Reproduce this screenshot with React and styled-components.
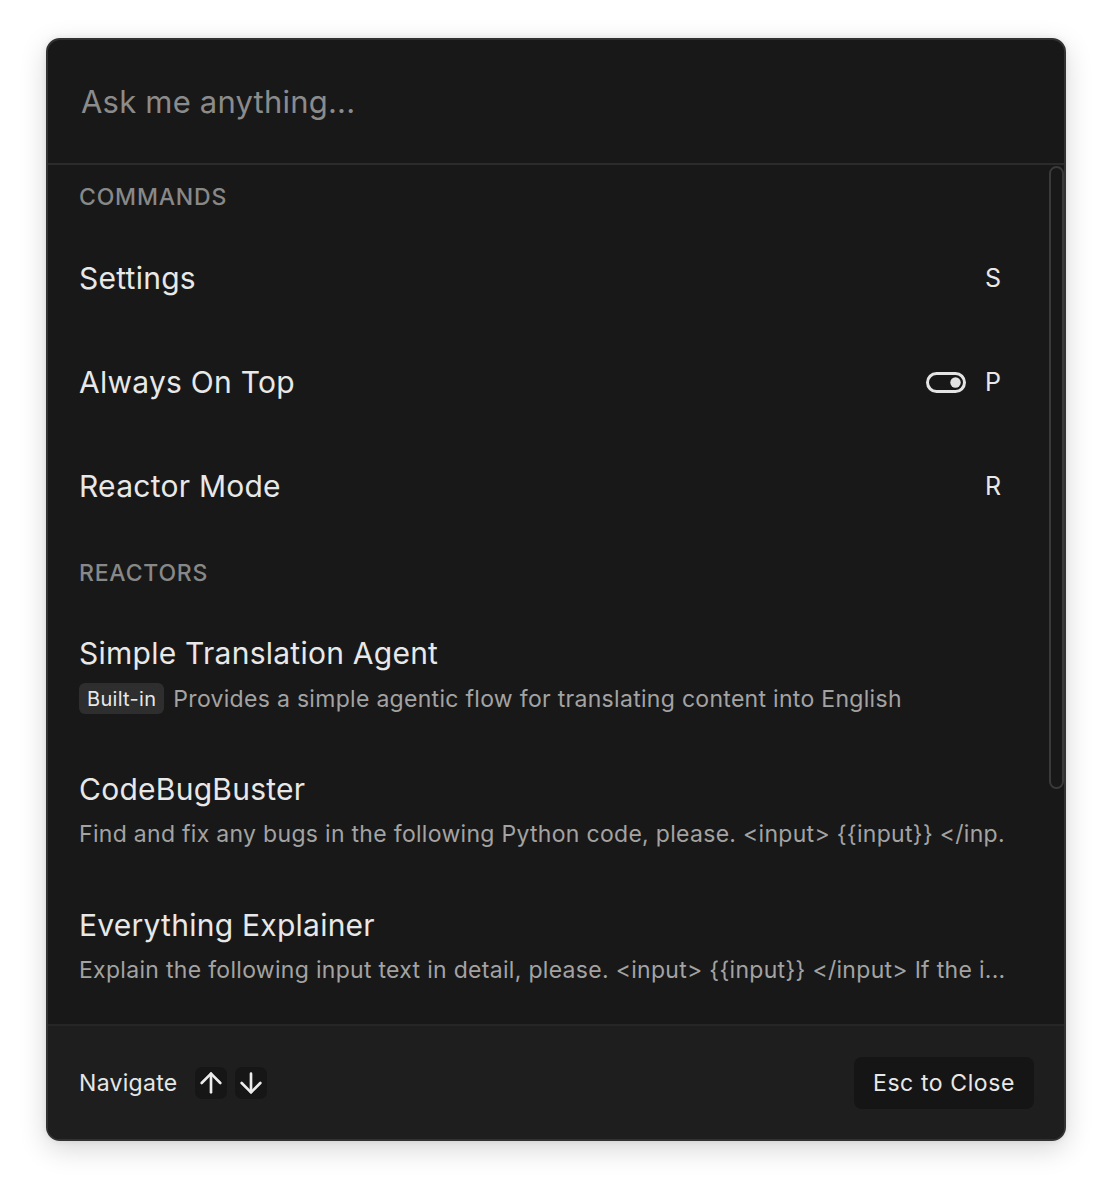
import styled, { createGlobalStyle } from "styled-components";
import { ArrowUp, ArrowDown } from "lucide-react";

const GlobalStyle = createGlobalStyle`
  * {
    box-sizing: border-box;
  }
  body {
    margin: 0;
    background: #ffffff;
    font-family: Inter, "Noto Sans", "Liberation Sans", sans-serif;
    -webkit-font-smoothing: antialiased;
  }
`;

const Page = styled.div`
  padding: 38px 46px;
`;
const Panel = styled.div`
  width: 1020px;
  height: 1103px;
  display: flex;
  flex-direction: column;
  background: #181818;
  border: 2px solid #323232;
  border-radius: 14px;
  overflow: hidden;
  box-shadow: 0 8px 28px rgba(0, 0, 0, 0.16), 0 0 6px rgba(0, 0, 0, 0.08);
`;
const Header = styled.div`
  height: 125px;
  flex-shrink: 0;
  display: flex;
  align-items: center;
  padding: 0 33px;
  border-bottom: 2px solid #2b2b2b;
`;
const SearchInput = styled.input`
  width: 100%;
  background: transparent;
  border: none;
  outline: none;
  font-family: inherit;
  font-size: 31px;
  letter-spacing: 0.2px;
  color: #e6e6e6;
  padding: 0;
  &::placeholder {
    color: #8b8b8b;
  }
`;
const ListArea = styled.div`
  flex: 1;
  min-height: 0;
  display: flex;
`;
const ListContent = styled.div`
  flex: 1;
  min-width: 0;
  overflow: hidden;
  padding: 0 40px 0 31px;
`;
const ScrollTrack = styled.div`
  width: 15px;
  flex-shrink: 0;
  padding-top: 1px;
`;
const ScrollThumb = styled.div`
  height: 623px;
  border: 2px solid #3a3a3a;
  border-radius: 8px;
`;
const Label = styled.div`
  padding: ${(p) => (p.$first ? "20px 0 17px" : "23px 0 25px")};
  font-size: 23px;
  line-height: 24px;
  font-weight: 500;
  letter-spacing: 0.8px;
  text-transform: uppercase;
  color: #888888;
`;
const CommandRow = styled.div`
  height: 104px;
  display: flex;
  align-items: center;
  justify-content: space-between;
`;
const Title = styled.div`
  font-size: 30px;
  line-height: 40px;
  letter-spacing: 0.25px;
  color: #e8e8e8;
  white-space: nowrap;
`;
const Trailing = styled.div`
  display: flex;
  align-items: center;
  gap: 11px;
`;
const Shortcut = styled.span`
  width: 32px;
  text-align: center;
  font-size: 25px;
  color: #e8e8e8;
`;
const ReactorItem = styled.div`
  height: 136px;
  padding-top: 23px;
`;
const DescRow = styled.div`
  margin-top: 10px;
  display: flex;
  align-items: center;
  gap: 9px;
  min-width: 0;
`;
const Badge = styled.span`
  flex-shrink: 0;
  height: 31px;
  padding: 0 8px;
  display: inline-flex;
  align-items: center;
  border-radius: 6px;
  background: #2e2e2e;
  color: #e8e8e8;
  font-size: 20px;
  letter-spacing: 0.3px;
`;
const Desc = styled.div`
  font-size: 23px;
  line-height: 30px;
  color: #a3a3a3;
  white-space: nowrap;
  overflow: hidden;
  text-overflow: ellipsis;
  letter-spacing: 0.3px;
`;
const Spacer = styled.div`
  height: 60px;
`;
const Footer = styled.div`
  height: 115px;
  flex-shrink: 0;
  display: flex;
  align-items: center;
  justify-content: space-between;
  padding: 0 30px 0 31px;
  background: #1e1e1e;
  border-top: 2px solid #262626;
`;
const Nav = styled.div`
  display: flex;
  align-items: center;
  gap: 8px;
  font-size: 23px;
  letter-spacing: 0.3px;
  color: #e6e6e6;
`;
const NavText = styled.span`
  margin-right: 9px;
`;
const Key = styled.span`
  width: 32px;
  height: 32px;
  display: inline-flex;
  align-items: center;
  justify-content: center;
  border-radius: 7px;
  background: #161616;
  color: #ececec;
`;
const CloseButton = styled.button`
  height: 52px;
  padding: 0 19px;
  border: none;
  border-radius: 8px;
  background: #151515;
  color: #e8e8e8;
  font-family: inherit;
  font-size: 23px;
  letter-spacing: 0.6px;
  cursor: pointer;
`;

const ToggleIcon = () => (
  <svg width="40" height="21" viewBox="0 0 40 21" fill="none">
    <rect x="1.5" y="1.5" width="37" height="18" rx="9" stroke="#e4e4e4" strokeWidth="3" />
    <circle cx="29.5" cy="10.5" r="5.2" fill="#e4e4e4" />
  </svg>
);

const commands = [
  { title: "Settings", key: "S" },
  { title: "Always On Top", key: "P", toggle: true },
  { title: "Reactor Mode", key: "R" },
];

const reactors = [
  {
    title: "Simple Translation Agent",
    builtIn: true,
    desc: "Provides a simple agentic flow for translating content into English",
  },
  {
    title: "CodeBugBuster",
    desc: "Find and fix any bugs in the following Python code, please. <input> {{input}} </inp.",
  },
  {
    title: "Everything Explainer",
    desc: "Explain the following input text in detail, please. <input> {{input}} </input> If the i...",
  },
  {
    title: "Email Polisher",
    desc: "Rewrite the following email so it reads clearly and politely. <input> {{input}} </input>",
  },
  {
    title: "Summary Writer",
    desc: "Summarize the following text in a few short bullet points. <input> {{input}} </input>",
  },
];

const App = () => {
  return (
    <Page>
      <GlobalStyle />
      <Panel>
        <Header>
          <SearchInput placeholder="Ask me anything..." />
        </Header>
        <ListArea>
          <ListContent>
            <Label $first>Commands</Label>
            {commands.map((cmd) => (
              <CommandRow key={cmd.key}>
                <Title>{cmd.title}</Title>
                <Trailing>
                  {cmd.toggle && <ToggleIcon />}
                  <Shortcut>{cmd.key}</Shortcut>
                </Trailing>
              </CommandRow>
            ))}
            <Label>Reactors</Label>
            {reactors.map((r) => (
              <ReactorItem key={r.title}>
                <Title>{r.title}</Title>
                <DescRow>
                  {r.builtIn && <Badge>Built-in</Badge>}
                  <Desc>{r.desc}</Desc>
                </DescRow>
              </ReactorItem>
            ))}
            <Spacer />
          </ListContent>
          <ScrollTrack>
            <ScrollThumb />
          </ScrollTrack>
        </ListArea>
        <Footer>
          <Nav>
            <NavText>Navigate</NavText>
            <Key>
              <ArrowUp size={32} strokeWidth={2} />
            </Key>
            <Key>
              <ArrowDown size={32} strokeWidth={2} />
            </Key>
          </Nav>
          <CloseButton>Esc to Close</CloseButton>
        </Footer>
      </Panel>
    </Page>
  );
};

export default App;
